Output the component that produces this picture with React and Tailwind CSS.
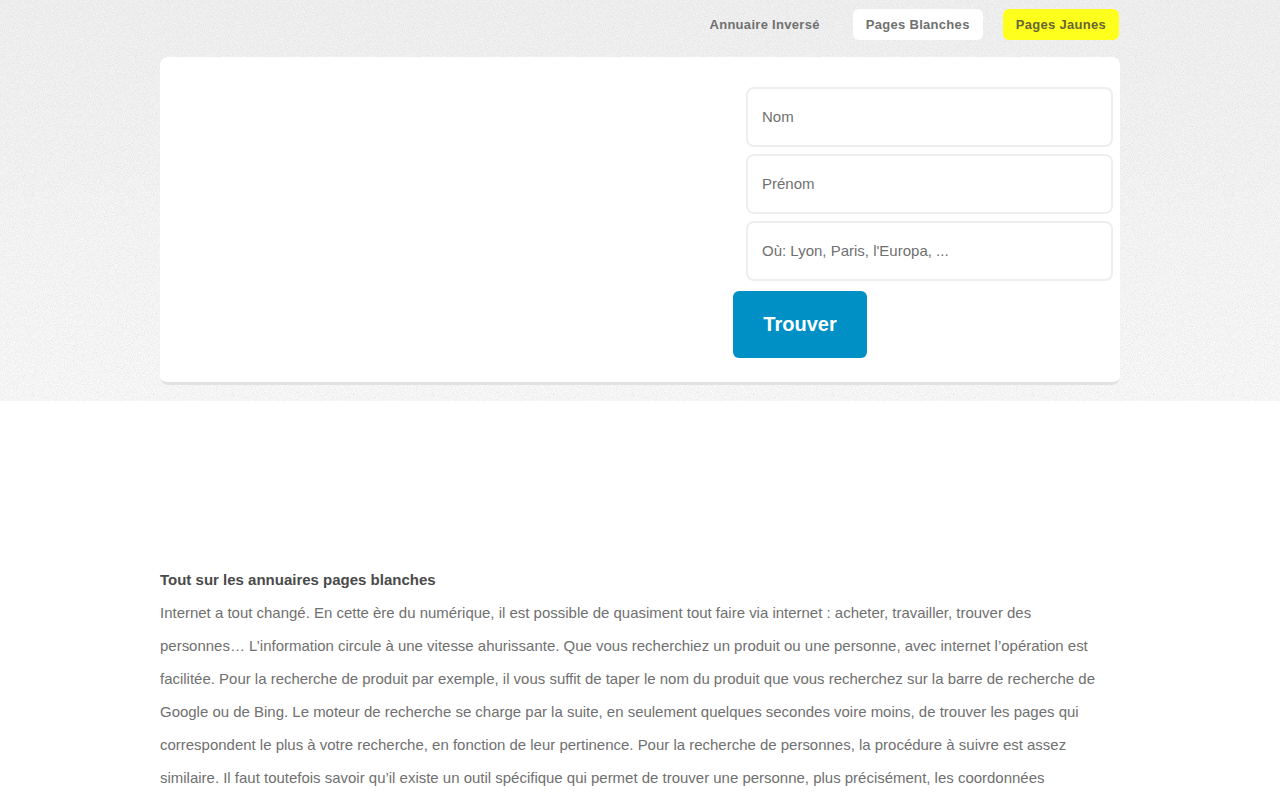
const noise = "bg-[url('data:image/svg+xml,%3Csvg%20xmlns=%22http://www.w3.org/2000/svg%22%20width=%22200%22%20height=%22200%22%3E%3Cfilter%20id=%22n%22%3E%3CfeTurbulence%20type=%22fractalNoise%22%20baseFrequency=%221.1%22%20numOctaves=%222%22%20stitchTiles=%22stitch%22/%3E%3CfeColorMatrix%20values=%220%200%200%200%200.5%200%200%200%200%200.5%200%200%200%200%200.5%200.5%200%200%200%20-0.1%22/%3E%3C/filter%3E%3Crect%20width=%22200%22%20height=%22200%22%20filter=%22url(%23n)%22/%3E%3C/svg%3E')]";

function Field({ label }) {
  return (
    <div className="h-[60px] w-[367px] rounded-lg border-2 border-[#eeeeee] bg-white pl-[14px] flex items-center text-[15px] text-[#707070]">
      {label}
    </div>
  );
}

function Tab({ children, className }) {
  return (
    <a className={"flex h-[31px] items-center rounded-md px-[13px] text-[13px] font-bold tracking-[0.3px] " + className}>
      {children}
    </a>
  );
}

export default function App() {
  return (
    <div className="min-h-screen bg-white font-['Liberation_Sans',Arial,sans-serif]">
      <header className="h-[401px] bg-gradient-to-b from-[#f5f5f5] to-white relative overflow-hidden">
        <div className={"absolute inset-0 " + noise} />
        <div className="relative mx-auto w-[960px]">
          <nav className="flex h-[57px] items-start justify-end gap-5 pt-[9px] pr-px">
            <Tab className="text-[#707070]">Annuaire Inversé</Tab>
            <Tab className="bg-white text-[#707070]">Pages Blanches</Tab>
            <Tab className="bg-[#ffff1e] text-[#666633]">Pages Jaunes</Tab>
          </nav>
          <div className="h-[328px] rounded-lg border-b-[3px] border-[#e2e2e2] bg-white pt-[30px] pl-[573px]">
            <div className="flex flex-col gap-[7px] pl-[13px]">
              <Field label="Nom" />
              <Field label="Prénom" />
              <Field label="Où: Lyon, Paris, l'Europa, ..." />
            </div>
            <button className="mt-[10px] flex h-[67px] w-[134px] items-center justify-center rounded-md bg-[#0090c5] pb-0.5 text-[20px] font-bold text-white">
              Trouver
            </button>
          </div>
        </div>
      </header>
      <main className="mx-auto w-[960px] pt-[162px] text-[14.97px] leading-[33px] text-[#707070]">
        <h2 className="text-[15px] font-bold text-[#4a4a4a]">Tout sur les annuaires pages blanches</h2>
        <p>
          Internet a tout changé. En cette ère du numérique, il est possible de quasiment tout faire via internet : acheter, travailler, trouver des personnes… L’information circule à une vitesse ahurissante. Que vous recherchiez un produit ou une personne, avec internet l’opération est facilitée. Pour la recherche de produit par exemple, il vous suffit de taper le nom du produit que vous recherchez sur la barre de recherche de Google ou de Bing. Le moteur de recherche se charge par la suite, en seulement quelques secondes voire moins, de trouver les pages qui correspondent le plus à votre recherche, en fonction de leur pertinence. Pour la recherche de personnes, la procédure à suivre est assez similaire. Il faut toutefois savoir qu’il existe un outil spécifique qui permet de trouver une personne, plus précisément, les coordonnées
        </p>
      </main>
    </div>
  );
}
